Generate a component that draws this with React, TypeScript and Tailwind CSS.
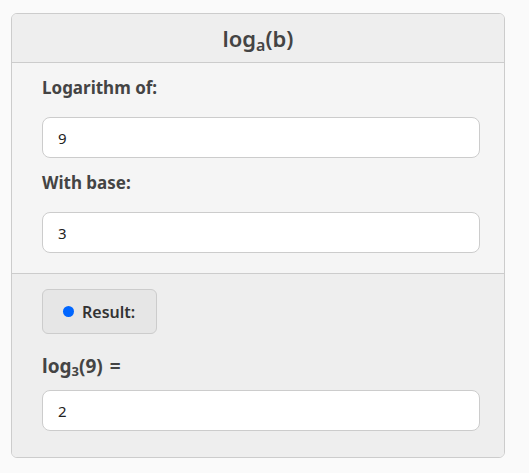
import React from 'react';

const Field: React.FC<{ value: string }> = ({ value }) => (
  <input
    readOnly
    value={value}
    className="block w-[438px] h-[41px] rounded-[8px] border border-[#cccccc] bg-white px-[15px] text-[15px] text-[#222] font-['Noto_Sans',sans-serif] outline-none"
  />
);

export default function App() {
  return (
    <div className="min-h-screen bg-[#fafafa] pt-[13px] pl-[11px] font-['Noto_Sans',sans-serif]">
      <div className="w-[494px] rounded-[6px] border border-[#cccccc] overflow-hidden">
        {/* Header */}
        <div className="h-[49px] bg-[#eeeeee] border-b border-[#cccccc] flex items-center justify-center">
          <h1 className="text-[22px] font-semibold text-[#444] leading-none">
            log<sub className="text-[16px]">a</sub>(b)
          </h1>
        </div>

        {/* Inputs */}
        <div className="bg-[#f5f5f5] border-b border-[#cccccc] pl-[30px] pt-[13px] pb-[20px]">
          <label className="block text-[17px] leading-[24px] font-bold text-[#444] mb-[17px]">Logarithm of:</label>
          <Field value="9" />
          <label className="block text-[17px] leading-[24px] font-bold text-[#444] mt-[13px] mb-[17px]">With base:</label>
          <Field value="3" />
        </div>

        {/* Result */}
        <div className="bg-[#eeeeee] pl-[30px] pt-[15px] pb-[26px]">
          <button className="flex items-center gap-[8px] h-[45px] w-[115px] pl-[20px] rounded-[6px] border border-[#cccccc] bg-[#e6e6e6] text-[16px] font-semibold text-[#333] font-['Noto_Sans',sans-serif]">
            <span className="w-[11px] h-[11px] rounded-full bg-[#0066ff]" />
            Result:
          </button>
          <div className="mt-[19px] mb-[10px] text-[19px] leading-[27px] font-bold text-[#444]">
            log<sub className="text-[13px]">3</sub>(9) <span className="ml-[2px]">=</span>
          </div>
          <Field value="2" />
        </div>
      </div>
    </div>
  );
}
